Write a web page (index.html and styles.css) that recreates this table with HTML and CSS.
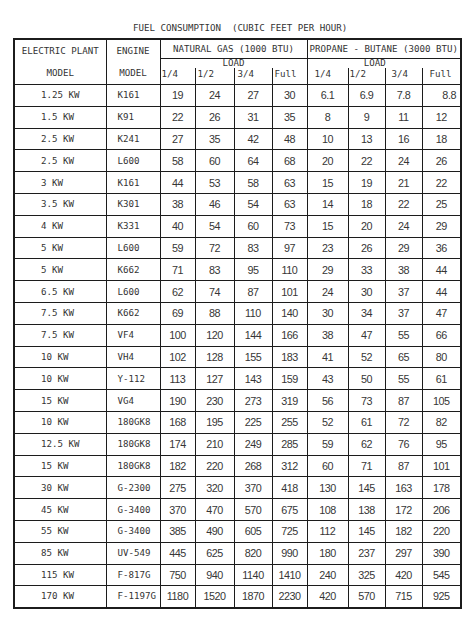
FILE: index.html
```html
<!DOCTYPE html>
<html>
<head>
<meta charset="utf-8">
<link rel="stylesheet" href="styles.css">
</head>
<body>
<div class="page">
  <div class="title">FUEL CONSUMPTION&nbsp;&nbsp;(CUBIC FEET PER HOUR)</div>
  <table class="fuel">
    <colgroup>
      <col class="c-plant"><col class="c-engine">
      <col class="c-35"><col class="c-39"><col class="c-38"><col class="c-35">
      <col class="c-41"><col class="c-37"><col class="c-37"><col class="c-39">
    </colgroup>
    <thead>
      <tr class="h-a">
        <th rowspan="3" class="h-stack">ELECTRIC PLANT<br>MODEL</th>
        <th rowspan="3" class="h-stack">ENGINE<br>MODEL</th>
        <th colspan="4" class="h-group">NATURAL GAS (1000 BTU)</th>
        <th colspan="4" class="h-group">PROPANE - BUTANE (3000 BTU)</th>
      </tr>
      <tr class="h-b">
        <th colspan="4" class="h-load">LOAD</th>
        <th colspan="4" class="h-load h-load-p">LOAD</th>
      </tr>
      <tr class="h-c">
        <th class="sub p1">1/4</th>
        <th class="sub p2">1/2</th>
        <th class="sub p3">3/4</th>
        <th class="sub p2">Full</th>
        <th class="sub p7">1/4</th>
        <th class="sub p1">1/2</th>
        <th class="sub p6">3/4</th>
        <th class="sub p7">Full</th>
      </tr>
    </thead>
    <tbody>
      <tr><td class="plant">1.25 KW</td><td class="eng">K161</td><td>19</td><td>24</td><td>27</td><td>30</td><td>6.1</td><td>6.9</td><td>7.8</td><td class="r">8.8</td></tr>
      <tr><td class="plant">1.5 KW</td><td class="eng">K91</td><td>22</td><td>26</td><td>31</td><td>35</td><td>8</td><td>9</td><td>11</td><td>12</td></tr>
      <tr><td class="plant">2.5 KW</td><td class="eng">K241</td><td>27</td><td>35</td><td>42</td><td>48</td><td>10</td><td>13</td><td>16</td><td>18</td></tr>
      <tr><td class="plant">2.5 KW</td><td class="eng">L600</td><td>58</td><td>60</td><td>64</td><td>68</td><td>20</td><td>22</td><td>24</td><td>26</td></tr>
      <tr><td class="plant">3 KW</td><td class="eng">K161</td><td>44</td><td>53</td><td>58</td><td>63</td><td>15</td><td>19</td><td>21</td><td>22</td></tr>
      <tr><td class="plant">3.5 KW</td><td class="eng">K301</td><td>38</td><td>46</td><td>54</td><td>63</td><td>14</td><td>18</td><td>22</td><td>25</td></tr>
      <tr><td class="plant">4 KW</td><td class="eng">K331</td><td>40</td><td>54</td><td>60</td><td>73</td><td>15</td><td>20</td><td>24</td><td>29</td></tr>
      <tr><td class="plant">5 KW</td><td class="eng">L600</td><td>59</td><td>72</td><td>83</td><td>97</td><td>23</td><td>26</td><td>29</td><td>36</td></tr>
      <tr><td class="plant">5 KW</td><td class="eng">K662</td><td>71</td><td>83</td><td>95</td><td>110</td><td>29</td><td>33</td><td>38</td><td>44</td></tr>
      <tr><td class="plant">6.5 KW</td><td class="eng">L600</td><td>62</td><td>74</td><td>87</td><td>101</td><td>24</td><td>30</td><td>37</td><td>44</td></tr>
      <tr><td class="plant">7.5 KW</td><td class="eng">K662</td><td>69</td><td>88</td><td>110</td><td>140</td><td>30</td><td>34</td><td>37</td><td>47</td></tr>
      <tr><td class="plant">7.5 KW</td><td class="eng">VF4</td><td>100</td><td>120</td><td>144</td><td>166</td><td>38</td><td>47</td><td>55</td><td>66</td></tr>
      <tr><td class="plant">10 KW</td><td class="eng">VH4</td><td>102</td><td>128</td><td>155</td><td>183</td><td>41</td><td>52</td><td>65</td><td>80</td></tr>
      <tr><td class="plant">10 KW</td><td class="eng">Y-112</td><td>113</td><td>127</td><td>143</td><td>159</td><td>43</td><td>50</td><td>55</td><td>61</td></tr>
      <tr><td class="plant">15 KW</td><td class="eng">VG4</td><td>190</td><td>230</td><td>273</td><td>319</td><td>56</td><td>73</td><td>87</td><td>105</td></tr>
      <tr><td class="plant">10 KW</td><td class="eng">180GK8</td><td>168</td><td>195</td><td>225</td><td>255</td><td>52</td><td>61</td><td>72</td><td>82</td></tr>
      <tr><td class="plant">12.5 KW</td><td class="eng">180GK8</td><td>174</td><td>210</td><td>249</td><td>285</td><td>59</td><td>62</td><td>76</td><td>95</td></tr>
      <tr><td class="plant">15 KW</td><td class="eng">180GK8</td><td>182</td><td>220</td><td>268</td><td>312</td><td>60</td><td>71</td><td>87</td><td>101</td></tr>
      <tr><td class="plant">30 KW</td><td class="eng">G-2300</td><td>275</td><td>320</td><td>370</td><td>418</td><td>130</td><td>145</td><td>163</td><td>178</td></tr>
      <tr><td class="plant">45 KW</td><td class="eng">G-3400</td><td>370</td><td>470</td><td>570</td><td>675</td><td>108</td><td>138</td><td>172</td><td>206</td></tr>
      <tr><td class="plant">55 KW</td><td class="eng">G-3400</td><td>385</td><td>490</td><td>605</td><td>725</td><td>112</td><td>145</td><td>182</td><td>220</td></tr>
      <tr><td class="plant">85 KW</td><td class="eng">UV-549</td><td>445</td><td>625</td><td>820</td><td>990</td><td>180</td><td>237</td><td>297</td><td>390</td></tr>
      <tr><td class="plant">115 KW</td><td class="eng">F-817G</td><td>750</td><td>940</td><td>1140</td><td>1410</td><td>240</td><td>325</td><td>420</td><td>545</td></tr>
      <tr><td class="plant">170 KW</td><td class="eng">F-1197G</td><td>1180</td><td>1520</td><td>1870</td><td>2230</td><td>420</td><td>570</td><td>715</td><td>925</td></tr>
    </tbody>
  </table>
</div>
</body>
</html>
```

FILE: styles.css
```css
html, body {
  margin: 0;
  padding: 0;
  background: #ffffff;
}

.page {
  padding: 23px 0 0 13px;
  color: #2e2e2e;
}

.title {
  font-family: "DejaVu Sans Mono", monospace;
  font-size: 9.15px;
  line-height: 10px;
  height: 10px;
  padding-left: 120px;
  margin-bottom: 5px;
  white-space: pre;
  color: #333333;
}

.fuel {
  border-collapse: collapse;
  table-layout: fixed;
  width: 447px;
  border: 2px solid #1c1c1c;
}

.c-plant { width: 92px; }
.c-engine { width: 54px; }
.c-35 { width: 35px; }
.c-37 { width: 37px; }
.c-38 { width: 38px; }
.c-39 { width: 39px; }
.c-41 { width: 41px; }

.fuel th {
  font-family: "DejaVu Sans Mono", monospace;
  font-size: 9.15px;
  font-weight: normal;
  color: #333333;
  padding: 0;
  white-space: nowrap;
  overflow: visible;
}

.h-stack {
  border: 1.5px solid #1c1c1c;
  line-height: 22px;
  text-align: center;
  vertical-align: middle;
}

.h-a { height: 19px; }
.h-b { height: 9px; }
.h-c { height: 17px; }

.h-group {
  border: 1.5px solid #1c1c1c;
  text-align: center;
  line-height: 12px;
  padding-top: 2px;
}

.h-load {
  border-left: 1.5px solid #1c1c1c;
  border-right: 1.5px solid #1c1c1c;
  border-top: none;
  border-bottom: none;
  text-align: center;
  line-height: 9px;
  vertical-align: top;
}

.h-load-p {
  padding-right: 18px !important;
}

.sub {
  border-left: 1.5px solid #1c1c1c;
  border-right: 1.5px solid #1c1c1c;
  border-top: none;
  text-align: left;
  vertical-align: top;
  line-height: 10px;
  padding-top: 1px !important;
}

.p1 { padding-left: 1px !important; }
.p2 { padding-left: 2px !important; }
.p3 { padding-left: 3px !important; }
.p6 { padding-left: 6px !important; }
.p7 { padding-left: 7px !important; }

.fuel tbody tr {
  height: 21.8px;
}

.fuel td {
  border: 1.5px solid #1c1c1c;
  padding: 0;
  text-align: center;
  vertical-align: middle;
  font-family: "Liberation Sans", Arial, sans-serif;
  font-size: 10.8px;
  letter-spacing: -0.45px;
  line-height: 12px;
  color: #363636;
  white-space: nowrap;
  overflow: visible;
}

.fuel td.plant,
.fuel td.eng {
  font-family: "DejaVu Sans Mono", monospace;
  font-size: 9.15px;
  letter-spacing: 0;
  text-align: left;
  color: #333333;
}

.fuel td.plant { padding-left: 26px; }
.fuel td.eng { padding-left: 11px; }

.fuel td.r {
  text-align: right;
  padding-right: 4px;
}
```
